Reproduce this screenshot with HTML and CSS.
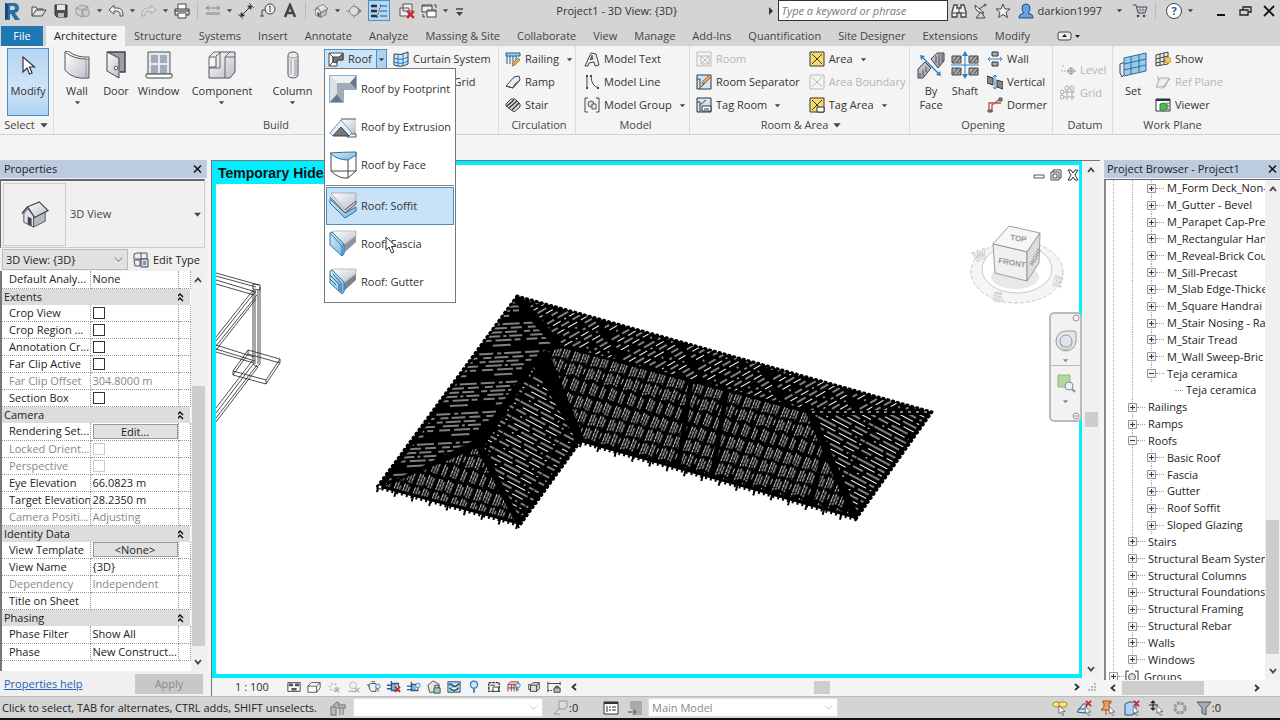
FILE: index.html
```
<!DOCTYPE html>
<html lang="en">
<head>
    <meta charset="UTF-8">
    <meta name="viewport" content="width=device-width, initial-scale=1.0">
    <title>Project1 - 3D View: {3D}</title>
    <link rel="stylesheet" href="styles.css">
</head>
<body>
    <!-- shared icons -->
    <svg class="defs" aria-hidden="true">
        <defs>
            <linearGradient id="steel" x1="0" y1="0" x2="1" y2="1"><stop offset="0" stop-color="#fff"/><stop offset="1" stop-color="#b9bec8"/></linearGradient>
            <linearGradient id="dark" x1="0" y1="0" x2="1" y2="1"><stop offset="0" stop-color="#e8eaee"/><stop offset="1" stop-color="#777d88"/></linearGradient>
            <linearGradient id="sky" x1="0" y1="0" x2="1" y2="1"><stop offset="0" stop-color="#d5ecfa"/><stop offset="1" stop-color="#7fb6dc"/></linearGradient>
        </defs>
        <symbol id="down" viewBox="0 0 8 8"><path d="M1 2.500h6L4 6z" fill="#444"/></symbol>
        <symbol id="chev-up" viewBox="0 0 10 10"><path d="M2 7l3-3.500 3 3.500" fill="none" stroke="#444" stroke-width="1.800"/></symbol>
        <symbol id="chev-down" viewBox="0 0 10 10"><path d="M2 3l3 3.500L8 3" fill="none" stroke="#444" stroke-width="1.800"/></symbol>
        <symbol id="chev-left" viewBox="0 0 10 10"><path d="M7 2L3.500 5 7 8" fill="none" stroke="#333" stroke-width="1.800"/></symbol>
        <symbol id="chev-right" viewBox="0 0 10 10"><path d="M3 2l3.500 3L3 8" fill="none" stroke="#333" stroke-width="1.800"/></symbol>
        <symbol id="chev-wide" viewBox="0 0 10 10"><path d="M1 3l4 4 4-4" fill="none" stroke="#666" stroke-width="1"/></symbol>
        <symbol id="collapse" viewBox="0 0 10 10"><path d="M2 5l3-3 3 3M2 9l3-3 3 3" fill="none" stroke="#111" stroke-width="1.500"/></symbol>
        <symbol id="cross" viewBox="0 0 10 10"><path d="M1.500 1.500l7 7M8.500 1.500l-7 7" stroke="#111" stroke-width="1.500"/></symbol>
        <symbol id="cursor" viewBox="0 0 12 18"><path d="M1 1v13l3-3 2.500 6 2.500-1-2.500-5.500H11z" fill="#fff" stroke="#334" stroke-width="1"/></symbol>
        <symbol id="plus" viewBox="0 0 9 9"><path d="M.5.5h8v8h-8z" fill="#f4f4f8" stroke="#999"/><path d="M2 4.500h5M4.500 2v5" stroke="#335"/></symbol>
        <symbol id="minus" viewBox="0 0 9 9"><path d="M.5.5h8v8h-8z" fill="#f4f4f8" stroke="#999"/><path d="M2 4.500h5" stroke="#335"/></symbol>
        <symbol id="bulb" viewBox="0 0 8 12"><circle cx="4" cy="4" r="3" fill="#cfe6fa" stroke="#3878b8"/><path d="M4 7v4" stroke="#3878b8" stroke-width="1.500"/></symbol>
        <symbol id="pencil" viewBox="0 0 10 10"><path d="M1 9l1-3 5-5 2 2-5 5z" fill="#f3a64a" stroke="#8a5a22" stroke-width=".7"/></symbol>
        <symbol id="redx" viewBox="0 0 8 8"><path d="M1 1l6 6M7 1L1 7" stroke="#d2232a" stroke-width="2"/></symbol>
        <symbol id="i-house" viewBox="0 0 32 32">
            <path d="M5 15v9l10 5V17L9 10z" fill="#dfe2e8" stroke="#555"/><path d="M15 18l12-5v10l-12 6z" fill="#b4b9c4" stroke="#555"/>
            <path d="M9 8L21 3l9 9-14 7z" fill="url(#steel)" stroke="#444" stroke-width="1.200"/><path d="M9 8l-6 7" stroke="#444" stroke-width="1.500"/><path d="M9 18l4 2v8l-4-2z" fill="#445"/>
        </symbol>
        <symbol id="i-model" viewBox="0 0 16 16"><path d="M1 15L7 2l5 1 3 11-4 1-1-4-5 1-1 3z" fill="#eee" stroke="#444"/><path d="M6 9l2-5 1 4z" fill="#777" stroke="#444" stroke-width=".7"/></symbol>
    </svg>

    <header class="titlebar">
        <div class="qat">
            <button class="app" aria-label="Revit menu"><svg viewBox="0 0 18 20"><path d="M2 2h8q6 0 6 5 0 4-4 5l5 7h-5l-4-6H7v6H2z" fill="#2c6da5"/><path d="M7 5h3q2 0 2 2t-2 2H7z" fill="#d4d4d4"/><path d="M2 2l3 2v13l-3 2z" fill="#174a7c"/></svg></button>
            <button class="tool" aria-label="Open"><svg viewBox="0 0 16 16"><path d="M1 13V4h4l1 2h6v2" fill="#eee" stroke="#444"/><path d="M1 13l4-6h10l-4 6z" fill="#ddd" stroke="#444"/></svg></button>
            <button class="tool" aria-label="Save"><svg viewBox="0 0 16 16"><path d="M2 2h12v12H4l-2-2z" fill="#4a4e5a" stroke="#333"/><path d="M4 2h8v5H4z" fill="#e8e8e8"/><path d="M5 10h6v4H5z" fill="#bbb"/></svg></button>
            <button class="tool" aria-label="Synchronize"><svg viewBox="0 0 16 16"><path d="M1 5l6-3 6 2v7l-6 3-6-3z" fill="#d0d0d0" stroke="#999"/><path d="M1 5l6 2 6-3M7 7v7" fill="none" stroke="#999"/><circle cx="11" cy="10" r="3.500" fill="#ccc" stroke="#999"/></svg></button>
            <svg class="caret"><use href="#down"/></svg>
            <button class="tool" aria-label="Undo"><svg viewBox="0 0 16 16"><path d="M1 7l5-5v3h3q6 0 6 7v1h-3q1-5-4-5H6v3z" fill="#eee" stroke="#555"/></svg></button>
            <svg class="caret"><use href="#down"/></svg>
            <button class="tool" aria-label="Redo"><svg viewBox="0 0 16 16"><path d="M15 7l-5-5v3H7Q1 5 1 12v1h3Q3 8 8 8h2v3z" fill="#ddd" stroke="#aaa"/></svg></button>
            <svg class="caret"><use href="#down"/></svg>
            <button class="tool" aria-label="Print"><svg viewBox="0 0 16 16"><path d="M4 6V1h8v5" fill="#fff" stroke="#444"/><path d="M1 6h14v6H1z" fill="#ddd" stroke="#333"/><path d="M4 10h8v5H4z" fill="#fff" stroke="#444"/><path d="M1 8h14" stroke="#333"/></svg></button>
            <span class="sep"></span>
            <button class="tool" aria-label="Measure"><svg viewBox="0 0 16 16"><path d="M1 5h14M4 3L1 5l3 2M12 3l3 2-3 2" fill="none" stroke="#888"/><path d="M1 9h14v3H1z" fill="#aaa"/></svg></button>
            <svg class="caret"><use href="#down"/></svg>
            <button class="tool" aria-label="Aligned dimension"><svg viewBox="0 0 16 16"><path d="M3 13L13 3" stroke="#333"/><path d="M2 14l1-5 4 4zM14 2l-5 1 4 4z" fill="#333"/><path d="M11 0l5 5M0 11l5 5" stroke="#555"/></svg></button>
            <button class="tool" aria-label="Tag by category"><svg viewBox="0 0 16 16"><circle cx="10" cy="6" r="5" fill="#eee" stroke="#444"/><path d="M5 7H2v6M9 4l1-1v6M0 13h4" fill="none" stroke="#444"/></svg></button>
            <button class="tool" aria-label="Text"><svg viewBox="0 0 16 16"><path d="M3 14L8 2l5 12M5 10h6" fill="none" stroke="#444" stroke-width="2.500"/></svg></button>
            <span class="sep"></span>
            <button class="tool" aria-label="Default 3D view"><svg><use href="#i-house"/></svg></button>
            <svg class="caret"><use href="#down"/></svg>
            <button class="tool" aria-label="Section"><svg viewBox="0 0 16 16"><path d="M10 3l6 5-6 5z" fill="#888"/><circle cx="8" cy="8" r="4.500" fill="#ddd" stroke="#888"/><path d="M0 8h3M8 1v2M8 13v2" stroke="#888"/></svg></button>
            <button class="tool on" aria-label="Thin lines"><svg viewBox="0 0 16 16"><path d="M0 3h6M0 8h6M0 13h6" stroke="#234" stroke-width="2.500"/><path d="M9 3h7M9 8h7M9 13h7" stroke="#357"/><path d="M6 15l4-14" stroke="#357" stroke-dasharray="2 1"/></svg></button>
            <button class="tool" aria-label="Close hidden"><svg viewBox="0 0 16 16"><path d="M4 1h9v7H4zM1 5h9v8H1z" fill="#eee" stroke="#555"/><use href="#redx" x="7" y="7" width="9" height="9"/></svg></button>
            <button class="tool" aria-label="Switch windows"><svg viewBox="0 0 16 16"><path d="M1 2h10v7H1z" fill="#eee" stroke="#444"/><path d="M6 7h9v7H6z" fill="#fff" stroke="#444"/><path d="M1 3h10M6 8h9M13 2h2v3M2 11v3h2" fill="none" stroke="#444"/></svg></button>
            <svg class="caret"><use href="#down"/></svg>
            <button class="tool slim" aria-label="Customize toolbar"><svg viewBox="0 0 16 16"><path d="M5 6h7" stroke="#444" stroke-width="1.500"/><path d="M5 9h7l-3.500 4z" fill="#444"/></svg></button>
        </div>
        <h1 class="title">Project1 - 3D View: {3D}</h1>
        <svg class="play" viewBox="0 0 8 8"><path d="M2 0v8l4-4z" fill="#333"/></svg>
        <input class="search" type="text" aria-label="Search help" placeholder="Type a keyword or phrase">
        <div class="account">
            <button class="tool" aria-label="Search"><svg viewBox="0 0 16 16"><path d="M3 2h3v3h4V2h3l2 7v5h-5v-4H6v4H1V9z" fill="#eee" stroke="#444" stroke-width="1.300"/><path d="M1 10h5M10 10h5M8 5v5" stroke="#444"/></svg></button>
            <button class="tool" aria-label="Communication center"><svg viewBox="0 0 16 16"><path d="M2 2q0 8 9 8z" fill="#eee" stroke="#444"/><path d="M6 6l6-4M7 10l-4 5h9l-3-5" fill="none" stroke="#444"/><circle cx="12" cy="2" r="1.500" fill="#666"/></svg></button>
            <button class="tool" aria-label="Favorites"><svg viewBox="0 0 16 16"><path d="M8 1l2 5h5l-4 3.500 1.500 5L8 11.500l-4.500 3L5 9.500 1 6h5z" fill="#eee" stroke="#444"/></svg></button>
            <button class="user"><svg viewBox="0 0 16 16"><path d="M8 1q4 0 4 4 0 3-2 5 5 1 5 4v1H1v-1q0-3 5-4-2-2-2-5 0-4 4-4z" fill="#6ba0e4" stroke="#224a8a"/></svg>darkion1997</button>
            <svg class="caret user-caret"><use href="#down"/></svg>
            <button class="tool" aria-label="App store"><svg viewBox="0 0 16 16"><path d="M1 2h3l2 8h7l2-6H5" fill="#dde" stroke="#445"/><circle cx="6" cy="13" r="1.300" fill="#445"/><circle cx="12" cy="13" r="1.300" fill="#445"/><path d="M6 7h8M8 4v6M11 4v6" stroke="#667" stroke-width=".7"/></svg></button>
            <span class="sep"></span>
            <button class="tool help" aria-label="Help"><span>?</span></button>
            <svg class="caret"><use href="#down"/></svg>
        </div>
        <div class="winctl">
            <button class="tool" aria-label="Minimize"><svg viewBox="0 0 16 16"><path d="M4 12h8" stroke="#111" stroke-width="2"/></svg></button>
            <button class="tool" aria-label="Restore"><svg viewBox="0 0 16 16"><path d="M6 7V4h8v5h-3M3 7h8v5H3z" fill="none" stroke="#222" stroke-width="1.300"/></svg></button>
            <button class="tool" aria-label="Close"><svg viewBox="0 0 16 16"><path d="M3 3l10 10M13 3L3 13" stroke="#111" stroke-width="1.800"/></svg></button>
        </div>
    </header>

    <nav class="tabs">
        <button class="tab file">File</button>
        <button class="tab active">Architecture</button>
        <button class="tab">Structure</button>
        <button class="tab">Systems</button>
        <button class="tab">Insert</button>
        <button class="tab">Annotate</button>
        <button class="tab">Analyze</button>
        <button class="tab">Massing &amp; Site</button>
        <button class="tab">Collaborate</button>
        <button class="tab">View</button>
        <button class="tab">Manage</button>
        <button class="tab">Add-Ins</button>
        <button class="tab">Quantification</button>
        <button class="tab">Site Designer</button>
        <button class="tab">Extensions</button>
        <button class="tab">Modify</button>
        <button class="tab state" aria-label="Minimize ribbon"><svg viewBox="0 0 24 10"><rect x="1" y="1" width="13" height="8" rx="2" fill="#eee" stroke="#444"/><path d="M5 6l2.500-3L10 6zM18 4h5l-2.500 3z" fill="#222"/></svg></button>
    </nav>

    <section class="ribbon">
        <div class="panel select">
            <div class="tools">
                <button class="big modify"><svg viewBox="0 0 28 28"><path d="M9 6v15l4-4 2.500 6 2.500-1-2.500-6h5z" fill="#fff" stroke="#334" stroke-width="1.200"/></svg>Modify</button>
            </div>
            <div class="caption">Select <svg class="caret"><use href="#down"/></svg></div>
        </div>
        <div class="panel build">
            <div class="tools">
                <button class="big"><svg viewBox="0 0 28 28"><path d="M2 1q10 8 24 7v19Q10 29 2 19z" fill="url(#steel)" stroke="#555"/><path d="M2 1l3-1q9 7 21 6v2" fill="#fff" stroke="#555"/><path d="M23 9v18" stroke="#999"/></svg>Wall<svg class="caret"><use href="#down"/></svg></button>
                <button class="big"><svg viewBox="0 0 28 28"><path d="M5 1h18v20h-5" fill="#999ea8" stroke="#444" stroke-width="1.500"/><path d="M5 1l12 6v20L5 20z" fill="url(#steel)" stroke="#444"/><circle cx="14" cy="17" r="1.800" fill="#fff" stroke="#555"/></svg>Door</button>
                <button class="big"><svg viewBox="0 0 28 28"><path d="M3 1h22v22H3z" fill="#e6e8ec" stroke="#555"/><path d="M6 4h7v8H6zM15 4h7v8h-7zM6 14h7v8H6zM15 14h7v8h-7z" fill="#a2abb9"/><path d="M1 23h26v3l-2 1H3l-2-1z" fill="#fff" stroke="#444"/></svg>Window</button>
                <button class="big"><svg viewBox="0 0 28 28"><path d="M1 17l1-1h6V5l5-4h14v20l-5 6H1z" fill="url(#steel)" stroke="#555"/><path d="M1 6l5-5h7M1 6v11h11V1M1 6h6M17 27V6l5-5M17 6h10" fill="none" stroke="#666"/></svg>Component<svg class="caret"><use href="#down"/></svg></button>
                <button class="big"><svg viewBox="0 0 28 28"><path d="M9 5q0-4 5-4t5 4v18q0 4-5 4t-5-4z" fill="#e9ebee" stroke="#555"/><path d="M9 5q5 4 10 0M12 8v16" fill="none" stroke="#999"/><path d="M15 8h3v17h-3z" fill="#b9bec8"/></svg>Column<svg class="caret"><use href="#down"/></svg></button>
                <div class="stack roofs">
                    <button class="small split"><svg viewBox="0 0 16 16"><path d="M1 2h14v7H9v6H1z" fill="#fff" stroke="#444"/><path d="M5 6h6l4-4v7H9v3l-4-1z" fill="#777" stroke="#444"/><path d="M1 2l4 4v5l-4 4" fill="none" stroke="#444"/></svg><span>Roof</span><i><svg class="caret"><use href="#down"/></svg></i></button>
                </div>
                <div class="stack">
                    <button class="small"><svg viewBox="0 0 16 16"><path d="M1 3q7 2 14-2v12q-7 4-14 1z" fill="#cfe6f7" stroke="#245"/><path d="M5 3v12M10 3v12M1 7q7 3 14-1M1 11q7 3 14-1" fill="none" stroke="#2374b4"/></svg>Curtain System</button>
                    <button class="small"><svg viewBox="0 0 16 16"><path d="M1 1h14v14H1zM6 1v14M11 1v14" fill="#cfe6f7" stroke="#2374b4"/></svg>Curtain Grid</button>
                    <button class="small"><svg viewBox="0 0 16 16"><path d="M5 1h6v14H5z" fill="#ddd" stroke="#444"/></svg>Mullion</button>
                </div>
            </div>
            <div class="caption">Build</div>
            <div class="menu">
                <button><svg viewBox="0 0 28 28"><path d="M1 1h26v13H14v13H1z" fill="#c3c8d1" stroke="#5b9bd5" stroke-width="1.500"/><path d="M1 1l7 7h13l6-7z" fill="#eef0f3"/><path d="M8 8v13l-7 6V1z" fill="#dde0e5"/><path d="M27 1v13l-6-6zM1 27h13l-6-8z" fill="#6f7580"/><path d="M8 8h13l6 6H14v13l-6-7z" fill="#a5abb6"/></svg>Roof by Footprint</button>
                <button><svg viewBox="0 0 28 28"><path d="M12 6h15v16h-8z" fill="url(#steel)"/><path d="M12 6h15M18 21h9v3h-9z" fill="#fff" stroke="#555"/><path d="M1 20L12 7l11 13-3 3-8-9-8 9z" fill="#eee" stroke="#5b9bd5"/><path d="M4 23l8-9 8 9z" fill="#777" stroke="#444"/></svg>Roof by Extrusion</button>
                <button><svg viewBox="0 0 28 28"><path d="M2 3v17q8 8 17 7l8-7V1M19 9v18M2 20h25" fill="none" stroke="#444"/><path d="M1 2q14-1 26-1v3l-8 5Q8 9 1 2z" fill="url(#sky)" stroke="#2c6d9f"/></svg>Roof by Face</button>
                <hr>
                <button class="hot"><svg viewBox="0 0 28 28"><path d="M1 11l15 15 11-7v-4l-11 6L1 7z" fill="url(#sky)" stroke="#2c6d9f"/><path d="M2 1h25v8L16 18z" fill="url(#steel)" stroke="#999" stroke-width=".7"/><path d="M16 18l11-9v3l-11 9L1 5" fill="#ccc" stroke="#555"/></svg>Roof: Soffit</button>
                <button><svg viewBox="0 0 28 28"><path d="M3 1h24v5L14 15z" fill="url(#steel)" stroke="#aaa" stroke-width=".7"/><path d="M15 15L27 6v6L15 23z" fill="#8e949f"/><path d="M1 3l2-1 12 12v10l-2 2L1 15z" fill="url(#sky)" stroke="#2c7ab0"/><path d="M1 3l12 13v10M13 16l2-2" fill="none" stroke="#2c7ab0"/></svg>Roof: Fascia</button>
                <button><svg viewBox="0 0 28 28"><path d="M3 1h24v5L14 15z" fill="url(#steel)" stroke="#aaa" stroke-width=".7"/><path d="M15 15L27 6v6L15 23z" fill="#7e848f"/><path d="M1 3l2-1 12 12v10l-2 2L1 15z" fill="url(#sky)" stroke="#2c7ab0"/><path d="M1 7l9 9v7M4 6l8 9v9M1 11l6 6" fill="none" stroke="#1e6496"/></svg>Roof: Gutter</button>
                <svg class="pointer"><use href="#cursor"/></svg>
            </div>
        </div>
        <div class="panel circulation">
            <div class="tools">
                <div class="stack">
                    <button class="small"><svg viewBox="0 0 16 16"><path d="M1 2h14v3H1zM2 5v8M5 5v8M8 5v8M11 5v5" fill="#9fd0f2" stroke="#1f5f92"/><use href="#pencil" x="6" y="6" width="10" height="10"/></svg>Railing<svg class="caret"><use href="#down"/></svg></button>
                    <button class="small"><svg viewBox="0 0 16 16"><path d="M1 12l8-9 5-1 1 4-7 8z" fill="#eee" stroke="#444"/><path d="M1 12l7 2M8 14l2-4 5-4" fill="none" stroke="#444"/></svg>Ramp</button>
                    <button class="small"><svg viewBox="0 0 16 16"><path d="M1 7l5-5h4l5 5v3l-6 5-8-6z" fill="#ddd" stroke="#444"/><path d="M2 9l7-6M4 11l8-7M7 13l7-7" stroke="#333" stroke-width="1.300"/></svg>Stair</button>
                </div>
            </div>
            <div class="caption">Circulation</div>
        </div>
        <div class="panel model">
            <div class="tools">
                <div class="stack">
                    <button class="small"><svg><use href="#i-model"/></svg>Model Text</button>
                    <button class="small"><svg viewBox="0 0 16 16"><path d="M3 2v12M7 2q0 10 8 12" fill="none" stroke="#444"/><path d="M2 1h2v2H2zM2 13h2v2H2zM6 1h2v2H6zM13 13h2v2h-2z" fill="#444"/></svg>Model Line</button>
                    <button class="small"><svg viewBox="0 0 16 16"><path d="M4 1H1v14h3M12 1h3v14h-3" fill="none" stroke="#444"/><circle cx="7" cy="7" r="3" fill="#ddd" stroke="#555"/><path d="M8 7h4v5H8z" fill="#eee" stroke="#555"/></svg>Model Group<svg class="caret"><use href="#down"/></svg></button>
                </div>
            </div>
            <div class="caption">Model</div>
        </div>
        <div class="panel room">
            <div class="tools">
                <div class="stack">
                    <button class="small" disabled><svg viewBox="0 0 16 16"><path d="M1 1h14v14H1zM5 5h8v8H5zM5 5l8 8M13 5l-8 8M1 5h4" fill="none" stroke="#bbb"/></svg>Room</button>
                    <button class="small"><svg viewBox="0 0 16 16"><path d="M1 1h14v14H1z" fill="#cde6f5" stroke="#333"/><path d="M1 5h3v10M5 13l8-8" fill="none" stroke="#345"/><use href="#pencil" x="5" y="1" width="10" height="10"/></svg>Room Separator</button>
                    <button class="small"><svg viewBox="0 0 16 16"><path d="M1 1h14v14H1z" fill="#cde6f5" stroke="#333"/><path d="M1 5h3v10M4 8l6-5" fill="none" stroke="#345"/><path d="M6 9h9v5H6z" fill="#fff" stroke="#333"/><path d="M8 12h5" stroke="#333"/></svg>Tag Room<svg class="caret"><use href="#down"/></svg></button>
                </div>
                <div class="stack">
                    <button class="small"><svg viewBox="0 0 16 16"><path d="M1 1h14v14H1zM3 3l10 10M13 3L3 13" fill="#f3dc6a" stroke="#433"/></svg>Area<svg class="caret"><use href="#down"/></svg></button>
                    <button class="small" disabled><svg viewBox="0 0 16 16"><path d="M1 1h14v14H1zM3 3l10 10M13 3L3 13" fill="none" stroke="#bbb"/></svg>Area Boundary</button>
                    <button class="small"><svg viewBox="0 0 16 16"><path d="M1 1h14v14H1zM3 3l10 10M13 3L3 13" fill="#f3dc6a" stroke="#433"/><path d="M8 10h7v5H8z" fill="#fff" stroke="#333"/></svg>Tag Area<svg class="caret"><use href="#down"/></svg></button>
                </div>
            </div>
            <div class="caption">Room &amp; Area <svg class="caret"><use href="#down"/></svg></div>
        </div>
        <div class="panel opening">
            <div class="tools">
                <button class="big"><svg viewBox="0 0 28 28"><path d="M1 27v-9l7-7 6 6-8 10zM14 8l6-6h7v8l-6 7z" fill="url(#dark)" stroke="#444"/><path d="M3 22v4M6 19v6M9 16v5M19 5v7M22 3v11M25 3v8" stroke="#555"/><path d="M5 6l17 17" stroke="#2c83cc" stroke-width="1.500"/><path d="M3 4l5 1-4 4zM24 25l-5-1 4-4z" fill="#2c83cc"/></svg>By<br>Face</button>
                <button class="big"><svg viewBox="0 0 28 28"><path d="M1 5h9v7H1zM18 5h9v7h-9zM1 17h9v7H1zM18 17h9v7h-9z" fill="#aaa" stroke="#444"/><path d="M2 11l5-6M6 11l4-5M19 11l5-6M23 11l4-5M2 23l5-6M6 23l4-5M19 23l5-6M23 23l4-5" stroke="#444"/><path d="M14 3v22M0 14h28" stroke="#2c83cc"/><path d="M11 5l3-5 3 5zM11 23l3 5 3-5z" fill="#2c83cc"/></svg>Shaft</button>
                <div class="stack">
                    <button class="small"><svg viewBox="0 0 16 16"><path d="M5 1h6v4H5zM5 11h6v4H5z" fill="#aaa" stroke="#333"/><path d="M1 8h14M3 6L1 8l2 2M13 6l2 2-2 2" fill="none" stroke="#2c83cc"/></svg>Wall</button>
                    <button class="small"><svg viewBox="0 0 16 16"><path d="M0 2l6 2v7L0 9zM10 6l6 2v7l-6-2z" fill="#888" stroke="#333"/><path d="M8 1v14M6 3l2-2 2 2M6 13l2 2 2-2" fill="none" stroke="#2c83cc"/></svg>Vertical</button>
                    <button class="small"><svg viewBox="0 0 16 16"><path d="M2 15V6h12M5 15V8l8-6" fill="none" stroke="#c0504d" stroke-width="1.300"/><path d="M12 1h3v3h-3zM1 13h4v2H1z" fill="#888" stroke="#555"/></svg>Dormer</button>
                </div>
            </div>
            <div class="caption">Opening</div>
        </div>
        <div class="panel datum">
            <div class="tools">
                <div class="stack">
                    <button class="small" disabled><svg viewBox="0 0 16 16"><path d="M1 9h9M3 3v3" stroke="#aaa" stroke-dasharray="2 1"/><circle cx="11" cy="9" r="3" fill="#ddd" stroke="#aaa"/><path d="M11 5v8M7 9h9" stroke="#999"/></svg>Level</button>
                    <button class="small" disabled><svg viewBox="0 0 16 16"><path d="M7 5v10M12 5v10M4 7h11M4 12h11" stroke="#aaa"/><g fill="none" stroke="#aaa"><circle cx="7" cy="3" r="2"/><circle cx="12" cy="3" r="2"/><circle cx="2" cy="7" r="2"/><circle cx="2" cy="12" r="2"/></g></svg>Grid</button>
                </div>
            </div>
            <div class="caption">Datum</div>
        </div>
        <div class="panel workplane">
            <div class="tools">
                <button class="big"><svg viewBox="0 0 28 28"><path d="M1 13l5-2v12l-3 3-2-4z" fill="#eee" stroke="#445"/><path d="M5 7l22-5v18L5 25z" fill="#9ccbea" stroke="#2c6d9f"/><path d="M12 6v17M20 4v17M5 13l22-5M5 19l22-5" stroke="#2c6d9f"/></svg>Set</button>
                <div class="stack">
                    <button class="small"><svg viewBox="0 0 16 16"><path d="M1 4l12-3v12L1 15z" fill="#eee" stroke="#444"/><path d="M5 3v11M9 2v11M1 8l12-3M1 12l12-3" stroke="#444"/><circle cx="13" cy="9" r="3" fill="#ffc84a" stroke="#b87a14" stroke-width=".6"/></svg>Show</button>
                    <button class="small" disabled><svg viewBox="0 0 16 16"><path d="M5 4h9l-4 9H1z" fill="#eee" stroke="#aaa"/><path d="M6 15l9-10M3 2v4" stroke="#aaa"/></svg>Ref Plane</button>
                    <button class="small"><svg viewBox="0 0 16 16"><path d="M1 2h14v12H1z" fill="#fff" stroke="#333"/><path d="M1 3h14" stroke="#333" stroke-width="2"/><path d="M5 7l4-1 3 1v5l-4 2-3-1z" fill="#5cb04c" stroke="#285"/><path d="M13 5v8" stroke="#444" stroke-dasharray="2 1"/></svg>Viewer</button>
                </div>
            </div>
            <div class="caption">Work Plane</div>
        </div>
    </section>

    <main class="work">
        <aside class="props">
            <h2 class="dock-title">Properties<button aria-label="Close properties"><svg><use href="#cross"/></svg></button></h2>
            <div class="type">
                <div class="thumb"><svg><use href="#i-house"/></svg></div>
                <select aria-label="Type selector"><option>3D View</option></select>
                <svg class="caret"><use href="#down"/></svg>
            </div>
            <div class="instance">
                <div class="combo"><select aria-label="View"><option>3D View: {3D}</option></select><svg><use href="#chev-wide"/></svg></div>
                <button class="edit"><svg viewBox="0 0 16 16"><path d="M1 2l3-1h4v6H1zM8 1h6v6H8M1 8h6v6H2z" fill="#eee" stroke="#556"/><path d="M8 7h7v8H8z" fill="#cde3f5" stroke="#445"/><path d="M10 10h3M10 12h3" stroke="#445"/></svg>Edit Type</button>
            </div>
            <div class="grid">
                <table>
                    <tr><th>Default Analy...</th><td>None</td><td></td></tr>
                    <tr class="group"><th colspan="2">Extents</th><td><svg><use href="#collapse"/></svg></td></tr>
                    <tr><th><label for="crop">Crop View</label></th><td><input type="checkbox" id="crop"></td><td></td></tr>
                    <tr><th><label for="region">Crop Region ...</label></th><td><input type="checkbox" id="region"></td><td></td></tr>
                    <tr><th><label for="anno">Annotation Cr...</label></th><td><input type="checkbox" id="anno"></td><td></td></tr>
                    <tr><th><label for="farclip">Far Clip Active</label></th><td><input type="checkbox" id="farclip"></td><td></td></tr>
                    <tr class="off"><th>Far Clip Offset</th><td>304.8000 m</td><td></td></tr>
                    <tr><th><label for="section">Section Box</label></th><td><input type="checkbox" id="section"></td><td></td></tr>
                    <tr class="group"><th colspan="2">Camera</th><td><svg><use href="#collapse"/></svg></td></tr>
                    <tr><th>Rendering Set...</th><td><button>Edit...</button></td><td></td></tr>
                    <tr class="off"><th><label for="locked">Locked Orient...</label></th><td><input type="checkbox" id="locked" disabled></td><td></td></tr>
                    <tr class="off"><th><label for="persp">Perspective</label></th><td><input type="checkbox" id="persp" disabled></td><td></td></tr>
                    <tr><th>Eye Elevation</th><td>66.0823 m</td><td></td></tr>
                    <tr><th>Target Elevation</th><td>28.2350 m</td><td></td></tr>
                    <tr class="off"><th>Camera Positi...</th><td>Adjusting</td><td></td></tr>
                    <tr class="group"><th colspan="2">Identity Data</th><td><svg><use href="#collapse"/></svg></td></tr>
                    <tr><th>View Template</th><td><button>&lt;None&gt;</button></td><td></td></tr>
                    <tr><th>View Name</th><td>{3D}</td><td></td></tr>
                    <tr class="off"><th>Dependency</th><td>Independent</td><td></td></tr>
                    <tr><th>Title on Sheet</th><td></td><td></td></tr>
                    <tr class="group"><th colspan="2">Phasing</th><td><svg><use href="#collapse"/></svg></td></tr>
                    <tr><th>Phase Filter</th><td>Show All</td><td></td></tr>
                    <tr><th>Phase</th><td>New Construct...</td><td></td></tr>
                </table>
                <div class="vscroll"><svg><use href="#chev-up"/></svg><span class="space"></span><span class="thumb"></span><svg><use href="#chev-down"/></svg></div>
            </div>
            <div class="foot"><a href="#help">Properties help</a><button disabled>Apply</button></div>
        </aside>

        <section class="view">
            <div class="stage">
                <div class="canvas">
                    <span class="mode">Temporary Hide/Isolate</span>
                    <svg class="drawing" viewBox="216 165 863 510" preserveAspectRatio="xMinYMin slice">
                        <defs>
                            <pattern id="left" width="46" height="29" patternUnits="userSpaceOnUse" patternTransform="rotate(-3)">
                                <path d="M0 2h14M18 2h4M25 2h17M4 6h8M15 6h14M33 6h11M0 10h6M9 10h15M27 10h12M6 14h16M25 14h3M31 14h13M2 18h11M17 18h16M36 18h6M14 23h18" stroke="#fff" stroke-width="1.200"/>
                            </pattern>
                            <pattern id="back" width="60" height="23" patternUnits="userSpaceOnUse" patternTransform="rotate(-30)">
                                <path d="M0 2h9M12 2h8M24 2h12M40 2h3M46 2h9M4 6.500h8M16 6.500h9M29 6.500h2M35 6.500h9M48 6.500h8M0 11h5M9 11h10M23 11h9M36 11h9M50 11h2M3 15.500h9M16 15.500h8M28 15.500h11M43 15.500h9M8 20h2M20 20h7M34 20h2M45 20h8" stroke="#fff" stroke-width="1.200"/>
                            </pattern>
                            <pattern id="front" width="19" height="60" patternUnits="userSpaceOnUse" patternTransform="skewY(15) skewX(-20)">
                                <path d="M1.500 1v12M4 1v12M6.500 3v10M10 0v11M12.500 1v12M15 2v11M1.500 16v12M4 15v12M6.500 18v9M10 15v12M12.500 15v11M15 17v10M1.500 31v12M4 30v12M6.500 32v9M10 29v12M12.500 30v12M16.500 32v6M1.500 45v12M4 47v11M10 44v12M12.500 45v12M15 46v11" stroke="#ddd" stroke-width="1" stroke-dasharray="4 .7"/>
                            </pattern>
                            <pattern id="hip" width="54" height="18" patternUnits="userSpaceOnUse" patternTransform="rotate(28)">
                                <path d="M0 2h20M23 2h15M42 2h2M48 2h5M5 6.500h17M26 6.500h20M49 6.500h2M0 11h11M15 11h18M37 11h14M7 15.500h2M13 15.500h19M36 15.500h12" stroke="#fff" stroke-width="1.200"/>
                            </pattern>
                        </defs>
                        <g>
                            <path d="M517 296L932 412 856 519 580 442 520 525 377 487z" fill="#000"/>
                            <path d="M514 301L552 345 532 360 478 438 385 485z" fill="url(#left)"/>
                            <path d="M524 299L926 410 810 410 564 346z" fill="url(#back)"/>
                            <path d="M545 352L562 348 806 413 850 514 582 439z" fill="url(#front)"/>
                            <path d="M478 448L516 520 385 486z" fill="url(#front)"/>
                            <path d="M534 367L576 440 520 519 484 447z" fill="url(#hip)"/>
                            <path d="M814 415L926 415 857 511z" fill="url(#hip)"/>
                            <path d="M546 352l36 88M691 382l-13 86M727 390l-15 86M824 452l-14 54M478 446l40 76M812 414l44 102" stroke="#000" stroke-width="5"/>
                            <path d="M517 296L932 412M517 296L377 487M932 412L856 519M580 442L520 525" fill="none" stroke="#000" stroke-width="3" stroke-linecap="round" stroke-dasharray="1 4"/>
                            <path d="M377 488L520 526M580 443L856 520" stroke="#000" stroke-width="8" stroke-dasharray="2 16"/>
                            <path d="M377 487L520 525M580 442L856 519" stroke="#000" stroke-width="4" stroke-dasharray="2 3"/>
                            <path d="M812 412h118" stroke="#fff" stroke-dasharray="3 5"/>
                            <path d="M515 520l4 8M852 513l4 8" stroke="#000" stroke-width="2"/>
                            <circle cx="380" cy="487" r="2" fill="#fff" stroke="#000"/>
                        </g>
                        <!-- wireframe frame, cut off by the left edge -->
                        <g fill="none" stroke="#222" stroke-width=".8">
                            <path d="M216 273l43 12M216 276l40 11M216 280l40 12M216 284l38 11M253 284l7 1v5l-7-1z"/>
                            <path d="M253 290v72M255 290v74M258 290v74M260 287v77M253 364l4 3 3-3"/>
                            <path d="M216 337l38-48M216 341l39-49M216 346l41-51M216 350l40-51"/>
                            <path d="M216 345l38 12M216 349l39 12M216 352l38 11"/>
                            <path d="M248 350l32 9-14 21-33-9zM248 354l32 9v-4M280 363l-14 21v-4M266 384l-33-9v-4M233 375l15-21v-4"/>
                            <path d="M252 361l-36 47M254 363l-38 50M257 365l-41 53M258 367l-42 55"/>
                        </g>
                        <!-- view cube -->
                        <g stroke="#bbb" stroke-width=".8">
                            <ellipse cx="1017" cy="272" rx="46" ry="31" fill="#f5f5f5" stroke-dasharray="4 2"/>
                            <ellipse cx="1017" cy="269" rx="35" ry="24" fill="#fff"/>
                            <ellipse cx="1015" cy="277" rx="24" ry="12" fill="#e8e8e8" stroke="none"/>
                            <path d="M993 244l16-18 31 7-13 19z" fill="#f6f6f6" stroke="#888"/>
                            <path d="M993 244l34 8v29l-32-8z" fill="#f0f0f0" stroke="#888"/>
                            <path d="M1027 252l13-19-1 30-12 18z" fill="#ddd" stroke="#888"/>
                        </g>
                        <g class="cube-text">
                            <text x="1010" y="240" transform="rotate(8 1010 240)">TOP</text>
                            <text x="998" y="263" transform="rotate(10 998 263)">FRONT</text>
                            <text class="side" x="1033" y="266" transform="rotate(-62 1033 266)">RIGHT</text>
                            <text class="compass" x="975" y="262" transform="rotate(-20 975 262)">W</text>
                            <text class="compass" x="993" y="302">S</text>
                            <text class="compass" x="1052" y="285" transform="rotate(15 1052 285)">E</text>
                        </g>
                    </svg>
                    <div class="mdi">
                        <button aria-label="Minimize view"><svg viewBox="0 0 12 12"><path d="M1 6h10v3H1z" fill="#fff" stroke="#555"/></svg></button>
                        <button aria-label="Restore view"><svg viewBox="0 0 12 12"><path d="M3 3V1h8v8H9M1 3h8v8H1zM3 5h4v4H3z" fill="none" stroke="#444"/></svg></button>
                        <button aria-label="Close view"><svg viewBox="0 0 12 12"><path d="M1 1h3l2 3 2-3h3L8 6l3 5H8L6 8l-2 3H1l3-5z" fill="#fff" stroke="#333"/></svg></button>
                    </div>
                    <div class="navbar">
                        <svg class="dot" viewBox="0 0 8 8"><circle cx="4" cy="4" r="3" fill="none" stroke="#999"/></svg>
                        <button aria-label="Steering wheel"><svg viewBox="0 0 22 22"><path d="M11 1h8q2 0 2 2v8A10 10 0 1 1 11 1z" fill="#e4e6ec" stroke="#999"/><circle cx="11" cy="11" r="6" fill="#dfe3ee" stroke="#999"/><path d="M5 11q0 7 6 9 6-2 6-9" fill="none" stroke="#aaa"/></svg></button>
                        <svg class="caret"><use href="#down"/></svg>
                        <hr>
                        <button aria-label="Zoom"><svg viewBox="0 0 22 22"><path d="M3 3h12v12H3z" fill="#b4d6a0" stroke="#94b880"/><circle cx="14" cy="14" r="4" fill="#eef2fa" stroke="#889"/><path d="M17 17l3 3" stroke="#889" stroke-width="2"/></svg></button>
                        <svg class="caret"><use href="#down"/></svg>
                        <svg class="dot last" viewBox="0 0 8 8"><circle cx="4" cy="4" r="3" fill="none" stroke="#999"/><path d="M2 4h4" stroke="#999"/></svg>
                    </div>
                </div>
                <div class="vscroll"><svg><use href="#chev-up"/></svg><span class="space"></span><span class="thumb"></span><span class="space"></span><svg><use href="#chev-down"/></svg></div>
            </div>
            <div class="viewbar">
                <button class="scale">1 : 100</button>
                <button aria-label="Detail level"><svg viewBox="0 0 16 16"><path d="M1 3h14v10H1z" fill="#fff" stroke="#333"/><path d="M2 4h5v3H2zM9 4h5v3H9zM5 9h6v3H5z" fill="#556"/></svg></button>
                <button aria-label="Visual style"><svg viewBox="0 0 16 16"><path d="M1 7l4-4h10v6l-4 5H1zM1 7h10v7M11 7l4-4" fill="#fff" stroke="#444"/></svg></button>
                <button aria-label="Sun path"><svg viewBox="0 0 16 16"><circle cx="7" cy="8" r="4" fill="none" stroke="#bbb" stroke-width="2" stroke-dasharray="2 2"/><path d="M9 9l5 5M14 9l-5 5" stroke="#aaa" stroke-width="1.500"/></svg></button>
                <button aria-label="Shadows"><svg viewBox="0 0 16 16"><circle cx="7" cy="6" r="4" fill="#eee" stroke="#bbb"/><path d="M2 13h8M9 9l5 5M14 9l-5 5" stroke="#aaa" stroke-width="1.500"/></svg></button>
                <button aria-label="Rendering dialog"><svg viewBox="0 0 16 16"><path d="M2 5l3-1h5l1 3-1 6H5l-2-2zM0 5l3 3M5 2h4" fill="#eee" stroke="#444"/><use href="#bulb" x="9" y="3" width="7" height="12"/></svg></button>
                <button aria-label="Crop view"><svg viewBox="0 0 16 16"><path d="M5 4h6v8H5z" fill="#7db4e0"/><path d="M5 1v11h10M0 6h5M0 10h5M5 4h8v4" fill="none" stroke="#245a8c" stroke-width="1.500"/><use href="#redx" x="8" y="6" width="8" height="9"/></svg></button>
                <button aria-label="Crop region"><svg viewBox="0 0 16 16"><path d="M5 5h5v7H5z" fill="#7db4e0"/><path d="M5 2v10h8M0 7h5M0 11h5M5 5h6" fill="none" stroke="#245a8c" stroke-width="1.500"/><use href="#bulb" x="9" y="2" width="7" height="12"/></svg></button>
                <button aria-label="Lock view"><svg viewBox="0 0 16 16"><path d="M1 6l6-5 7 4-1 9H3z" fill="#e4e4e4" stroke="#444"/><path d="M8 9h7v6H8z" fill="#9fd0b8" stroke="#345"/><path d="M9 9V6h4v3" fill="none" stroke="#345"/></svg></button>
                <button aria-label="Temporary hide"><svg viewBox="0 0 16 16"><path d="M1 2h14v12H1z" fill="#9fd8ee" stroke="#346"/><path d="M2 6q2-3 4 0 3 3 8-2M3 9q5 6 10 0" fill="#fff" stroke="#234" stroke-width="1.500"/></svg></button>
                <button aria-label="Reveal hidden"><svg><use href="#bulb"/></svg></button>
                <button aria-label="View properties"><svg viewBox="0 0 16 16"><path d="M2 3h12v10H2z" fill="#eee" stroke="#333" stroke-width="1.500" stroke-dasharray="3 1"/><path d="M7 8h6v5H7zM4 6h5" fill="#fff" stroke="#333"/></svg></button>
                <button aria-label="Analytical model"><svg viewBox="0 0 16 16"><path d="M1 13V5l3-3h9v3M1 5h10v8M5 5v8M8 5v8M1 9h10" fill="#f1d5d5" stroke="#844"/><use href="#bulb" x="9" y="2" width="7" height="12"/></svg></button>
                <button aria-label="Displacement"><svg viewBox="0 0 16 16"><path d="M4 6l3-3h7v7l-3 3H4z" fill="#ddd" stroke="#333"/><path d="M4 6h7v7M11 6l3-3M4 5H2v6h2" fill="none" stroke="#333"/></svg></button>
                <button aria-label="Constraints"><svg viewBox="0 0 16 16"><path d="M1 2v12M15 2v4M1 4h14" fill="none" stroke="#333"/><path d="M8 9h7v5H8zM10 9V7h3v2" fill="#bbb" stroke="#333"/><path d="M1 12h6" stroke="#333" stroke-dasharray="2 1"/></svg></button>
                <button aria-label="Scroll left"><svg class="arrow"><use href="#chev-left"/></svg></button>
                <span class="track"><span class="thumb"></span></span>
                <button aria-label="Scroll right"><svg class="arrow"><use href="#chev-right"/></svg></button>
                <svg class="grip" viewBox="0 0 10 10"><path d="M7 1h2v2H7zM4 4h2v2H4zM7 4h2v2H7zM1 7h2v2H1zM4 7h2v2H4zM7 7h2v2H7z" fill="#bbb"/></svg>
            </div>
        </section>

        <aside class="browser">
            <h2 class="dock-title">Project Browser - Project1<button aria-label="Close browser"><svg><use href="#cross"/></svg></button></h2>
            <div class="tree-wrap">
                <div class="tree-view">
                    <ul class="tree">
                        <li class="l2"><svg><use href="#plus"/></svg>M_Form Deck_Non-</li>
                        <li class="l2"><svg><use href="#plus"/></svg>M_Gutter - Bevel</li>
                        <li class="l2"><svg><use href="#plus"/></svg>M_Parapet Cap-Prec</li>
                        <li class="l2"><svg><use href="#plus"/></svg>M_Rectangular Han</li>
                        <li class="l2"><svg><use href="#plus"/></svg>M_Reveal-Brick Cou</li>
                        <li class="l2"><svg><use href="#plus"/></svg>M_Sill-Precast</li>
                        <li class="l2"><svg><use href="#plus"/></svg>M_Slab Edge-Thicke</li>
                        <li class="l2"><svg><use href="#plus"/></svg>M_Square Handrai</li>
                        <li class="l2"><svg><use href="#plus"/></svg>M_Stair Nosing - Ra</li>
                        <li class="l2"><svg><use href="#plus"/></svg>M_Stair Tread</li>
                        <li class="l2"><svg><use href="#plus"/></svg>M_Wall Sweep-Bric</li>
                        <li class="l2"><svg><use href="#minus"/></svg>Teja ceramica</li>
                        <li class="l3">Teja ceramica</li>
                        <li class="l1"><svg><use href="#plus"/></svg>Railings</li>
                        <li class="l1"><svg><use href="#plus"/></svg>Ramps</li>
                        <li class="l1"><svg><use href="#minus"/></svg>Roofs</li>
                        <li class="l2"><svg><use href="#plus"/></svg>Basic Roof</li>
                        <li class="l2"><svg><use href="#plus"/></svg>Fascia</li>
                        <li class="l2"><svg><use href="#plus"/></svg>Gutter</li>
                        <li class="l2"><svg><use href="#plus"/></svg>Roof Soffit</li>
                        <li class="l2"><svg><use href="#plus"/></svg>Sloped Glazing</li>
                        <li class="l1"><svg><use href="#plus"/></svg>Stairs</li>
                        <li class="l1"><svg><use href="#plus"/></svg>Structural Beam System</li>
                        <li class="l1"><svg><use href="#plus"/></svg>Structural Columns</li>
                        <li class="l1"><svg><use href="#plus"/></svg>Structural Foundations</li>
                        <li class="l1"><svg><use href="#plus"/></svg>Structural Framing</li>
                        <li class="l1"><svg><use href="#plus"/></svg>Structural Rebar</li>
                        <li class="l1"><svg><use href="#plus"/></svg>Walls</li>
                        <li class="l1"><svg><use href="#plus"/></svg>Windows</li>
                        <li class="l0"><svg><use href="#plus"/></svg><svg class="kind" viewBox="0 0 14 14"><path d="M4 1H1v12h3M10 1h3v12h-3" fill="none" stroke="#333"/><circle cx="7" cy="7" r="3.500" fill="#ddd" stroke="#555"/></svg>Groups</li>
                    </ul>
                </div>
                <div class="vscroll"><svg><use href="#chev-up"/></svg><span class="space"></span><span class="thumb"></span><svg><use href="#chev-down"/></svg></div>
            </div>
            <div class="hscroll"><svg><use href="#chev-left"/></svg><span class="thumb"></span><span class="space"></span><svg><use href="#chev-right"/></svg></div>
        </aside>
    </main>

    <footer class="status">
        <p>Click to select, TAB for alternates, CTRL adds, SHIFT unselects.</p>
        <svg viewBox="0 0 16 16"><path d="M1 7h5v8H1zM8 5h7v3h-7zM10 8v7M13 8v7M3 6l4-4 3 2" fill="#bbb" stroke="#888" stroke-width="1.300"/></svg>
        <div class="combo workset"><select aria-label="Active workset"><option></option></select><svg><use href="#chev-wide"/></svg></div>
        <button class="count"><svg viewBox="0 0 16 16"><path d="M6 1h8v6l-3 2H6zM6 9l-5 5h6" fill="#ddd" stroke="#999"/></svg>:0</button>
        <button class="opt" aria-label="Design options"><svg viewBox="0 0 16 16"><path d="M1 2h14v12H1z" fill="#fff" stroke="#333"/><path d="M1 3h14" stroke="#333" stroke-width="2"/><path d="M4 6v6M6 7h2M6 10h2M9 7h4M9 10h4" stroke="#333"/></svg></button>
        <button class="opt" aria-label="Active option"><svg viewBox="0 0 16 16"><path d="M3 1h12v14H8V9H3z" fill="#aaa"/><path d="M1 12h7M6 9l3 3-3 3" fill="none" stroke="#777" stroke-width="1.500"/></svg></button>
        <div class="combo option"><select aria-label="Design option" disabled><option>Main Model</option></select><svg><use href="#chev-wide"/></svg></div>
        <div class="filters">
            <button aria-label="Select links"><svg viewBox="0 0 16 16"><rect x="1" y="2" width="7" height="5" rx="2.500" fill="#ffe680" stroke="#a8841c"/><rect x="7" y="2" width="8" height="5" rx="2.500" fill="#ffe680" stroke="#a8841c"/><use href="#cursor" x="6" y="5" width="8" height="11"/></svg></button>
            <button aria-label="Select underlay"><svg viewBox="0 0 16 16"><path d="M1 12l6-8h4l-2 9zM2 9h8" fill="#cfe3f6" stroke="#357"/><use href="#redx" x="9" y="0" width="7" height="7"/><use href="#cursor" x="8" y="6" width="8" height="10"/></svg></button>
            <button aria-label="Select pinned"><svg viewBox="0 0 16 16"><path d="M3 1h8v2h-2v4l3 3H1l3-3V3H3zM6 10v5" fill="#f2a060" stroke="#a0501c"/><use href="#cursor" x="8" y="6" width="8" height="10"/></svg></button>
            <button aria-label="Select by face"><svg viewBox="0 0 16 16"><path d="M1 4l4-2h7v11l-4 2H1z" fill="#a9d3f0" stroke="#357"/><use href="#redx" x="9" y="0" width="7" height="7"/><use href="#cursor" x="8" y="6" width="8" height="10"/></svg></button>
            <button aria-label="Drag on selection"><svg viewBox="0 0 16 16"><path d="M5 1v9M1 5h9M3 3l2-2 2 2M3 8l2 2 2-2" fill="none" stroke="#222" stroke-width="1.200"/><use href="#cursor" x="8" y="5" width="8" height="11"/></svg></button>
            <button aria-label="Background processes"><svg viewBox="0 0 16 16"><circle cx="8" cy="8" r="5" fill="none" stroke="#999" stroke-width="3" stroke-dasharray="3 1"/></svg></button>
            <button class="count"><svg viewBox="0 0 16 16"><path d="M1 2h14l-5 6v7l-4-2V8z" fill="#a9acb4" stroke="#556"/></svg>:0</button>
        </div>
    </footer>
</body>
</html>
```
FILE: styles.css
```
* {
    box-sizing: border-box;
}
body, html {
    margin: 0;
    padding: 0;
    height: 100%;
    overflow: hidden;
}
body {
    display: flex;
    flex-direction: column;
    background: #f4f4f4;
    border-bottom: 2px solid #111;
    color: #333;
    font: 11px/16px "Open Sans", "Noto Sans", sans-serif;
}
button, input, select {
    font: inherit;
    color: inherit;
    margin: 0;
    padding: 0;
    border: none;
    border-radius: 0;
    background: none;
}
button {
    white-space: nowrap;
}
select {
    appearance: none;
    opacity: 1;
}
svg {
    display: block;
    flex: none;
    width: 16px;
    height: 16px;
}
.defs {
    position: absolute;
    width: 0;
    height: 0;
}
.caret {
    width: 7px;
    height: 7px;
}

/* title bar */
.titlebar {
    display: flex;
    align-items: center;
    flex: none;
    height: 26px;
    padding-bottom: 5px;
    background: #d4d4d4;
}
.qat, .account, .winctl {
    display: flex;
    align-items: center;
}
.tool {
    display: flex;
    align-items: center;
    justify-content: center;
    width: 22px;
    height: 21px;
}
.titlebar .caret {
    margin: 0 2px;
}
.app {
    width: 28px;
    padding-left: 3px;
}
.app svg {
    width: 18px;
    height: 20px;
}
.tool.on {
    background: #b5d6f2;
    border: 1px solid #4b8fc7;
    margin: 0 6px 0 3px;
}
.tool.slim {
    width: 16px;
}
.sep {
    width: 1px;
    height: 18px;
    margin: 0 4px;
    background: #bbb;
}
.title {
    flex: 1;
    margin: 0;
    font-size: 11px;
    font-weight: 400;
    text-align: center;
}
.play {
    width: 8px;
    height: 8px;
    margin-right: 3px;
}
.search {
    width: 170px;
    height: 21px;
    padding: 0 3px;
    border: 1px solid #333;
    background: #fff;
}
.search::placeholder {
    color: #777;
    font-style: italic;
    opacity: 1;
}
.user {
    display: flex;
    align-items: center;
    gap: 4px;
    margin-left: 4px;
}
.titlebar .user-caret {
    margin: 0 6px 0 14px;
}
.help span {
    width: 16px;
    height: 16px;
    border: 1px solid #345;
    border-radius: 50%;
    background: #fff;
    color: #1c5a9c;
    font-weight: 700;
    line-height: 14px;
}
.account .help {
    margin-left: 3px;
}
.winctl {
    margin-left: 14px;
    gap: 2px;
}

/* tabs */
.tabs {
    display: flex;
    flex: none;
    gap: 1px;
    height: 20px;
    padding-left: 1px;
    background: #d4d4d4;
}
.tab {
    padding: 0 8px;
    color: #444;
}
.tab.file {
    width: 42px;
    margin-right: 2px;
    background: #1f77b4;
    color: #fff;
}
.tab.active {
    background: #f4f4f4;
    color: #222;
}
.tab.state {
    padding-left: 18px;
}
.tab.state svg {
    width: 24px;
    height: 10px;
}

/* ribbon */
.ribbon {
    display: flex;
    flex: none;
    height: 89px;
    border-bottom: 1px solid #d2d2d2;
}
.panel {
    display: flex;
    flex-direction: column;
    position: relative;
    flex: none;
    border-right: 1px solid #dcdcdc;
}
.tools {
    display: flex;
    flex: 1;
    padding-top: 2px;
}
.caption {
    display: flex;
    justify-content: center;
    align-items: center;
    gap: 4px;
    height: 18px;
    color: #444;
}
.caption .caret {
    width: 10px;
    height: 10px;
}
.select { width: 54px; }
.build { width: 445px; }
.circulation { width: 77px; padding-left: 4px; }
.model { width: 114px; padding-left: 6px; }
.room { width: 220px; padding-left: 4px; }
.opening { width: 143px; padding-left: 4px; }
.datum { width: 60px; padding-left: 5px; }
.workplane { width: 116px; padding-left: 3px; border: none; }
.big {
    display: flex;
    flex-direction: column;
    align-items: center;
    min-width: 34px;
    padding-top: 3px;
    line-height: 14px;
    align-self: flex-start;
}
.big svg {
    width: 28px;
    height: 28px;
    margin-bottom: 5px;
}
.big .caret {
    width: 7px;
    height: 7px;
    margin: 1px 0 0;
}
.modify {
    width: 42px;
    height: 68px;
    margin-left: 7px;
    background: linear-gradient(#b5d5f2, #cfe4f7 60%, #b0d2f2);
    border: 1px solid #4b8fc7;
    padding-top: 2px;
}
.build .tools {
    display: grid;
    grid-template-columns: 36px 42px 43px 84px 57px 70px auto;
    padding-left: 5px;
}
.build .big {
    justify-self: center;
}
.stack {
    display: flex;
    flex-direction: column;
    align-items: flex-start;
    gap: 1px;
}
.small {
    display: flex;
    align-items: center;
    gap: 4px;
    height: 22px;
    padding: 0 3px 0 2px;
}
.small .caret {
    width: 7px;
    height: 7px;
    margin-left: 3px;
}
.small:disabled {
    color: #b4b4b4;
}
.split {
    width: 63px;
    height: 20px;
    margin-top: 1px;
    margin-bottom: 1px;
    margin-left: 3px;
    padding: 0 0 0 3px;
    border: 1px solid #4b8fc7;
    background: #cde4f7;
}
.split span {
    flex: 1;
    text-align: left;
}
.split i {
    display: flex;
    align-items: center;
    align-self: stretch;
    padding: 0 1px;
    border-left: 1px solid #4b8fc7;
    background: #b0d2f2;
}
.split .caret {
    margin: 0;
}
.room .tools {
    gap: 4px;
}
.opening .stack {
    margin-left: 3px;
}
.datum .stack {
    padding-top: 11px;
}
.workplane .tools {
    gap: 3px;
}

/* roof drop-down */
.menu {
    position: absolute;
    top: 22px;
    left: 270px;
    z-index: 5;
    width: 132px;
    padding: 1px;
    border: 1px solid #777;
    background: #fff;
}
.menu button {
    display: flex;
    align-items: center;
    gap: 4px;
    width: 100%;
    height: 38px;
    padding-left: 2px;
    border: 1px solid transparent;
}
.menu button svg {
    width: 28px;
    height: 28px;
}
.menu hr {
    margin: 1px 0;
    border: none;
    border-top: 1px solid #888;
}
.menu .hot {
    background: #c8e2f7;
    border-color: #4b8fc7;
}
.pointer {
    position: absolute;
    left: 60px;
    top: 167px;
    width: 12px;
    height: 18px;
}

/* docked windows */
.work {
    display: flex;
    flex: 1;
    min-height: 0;
    padding-top: 25px;
}
.dock-title {
    display: flex;
    align-items: center;
    justify-content: space-between;
    flex: none;
    height: 18px;
    margin: 0;
    padding: 0 4px;
    background: #bccbdd;
    color: #222;
    font-size: 11px;
    font-weight: 400;
}
.dock-title svg {
    width: 11px;
    height: 10px;
}
.props {
    display: flex;
    flex-direction: column;
    flex: none;
    width: 207px;
    padding-right: 2px;
    background: #f0f0f0;
    color: #222;
}
.props .dock-title {
    margin-right: -2px;
}
.type {
    display: flex;
    align-items: center;
    flex: none;
    height: 69px;
    margin-top: 1px;
    padding: 3px 2px;
    border: 1px solid #ccc;
    border-top: 2px solid #666;
    border-left: 1px solid #666;
}
.type .thumb {
    padding: 15px;
    border: 1px solid #ccc;
}
.type .thumb svg {
    width: 31px;
    height: 31px;
}
.type select {
    flex: 1;
    padding-left: 4px;
    color: #444;
}
.type .caret {
    width: 9px;
    height: 9px;
}
.instance {
    display: flex;
    flex: none;
    height: 23px;
    padding: 1px 0 1px 2px;
}
.combo {
    display: flex;
    align-items: center;
    position: relative;
    background: #e1e1e1;
    border: 1px solid #bbb;
}
.combo select {
    flex: 1;
    padding: 0 3px;
}
.combo svg {
    width: 9px;
    height: 9px;
    margin-right: 4px;
}
.instance .combo {
    width: 126px;
}
.edit {
    display: flex;
    align-items: center;
    gap: 4px;
    padding-left: 5px;
}
.grid {
    display: flex;
    flex: 1;
    min-height: 0;
    border-left: 2px solid #777;
    background: #fff;
}
table {
    flex: 1;
    align-self: flex-start;
    table-layout: fixed;
    border-collapse: collapse;
    width: 187px;
}
th, td {
    height: 17px;
    padding: 0 0 0 2px;
    border: 1px dotted #999;
    border-top: none;
    border-left: none;
    font-weight: 400;
    line-height: 16px;
    text-align: left;
    white-space: nowrap;
    overflow: hidden;
}
th {
    width: 88px;
    padding-left: 7px;
}
td:last-child {
    width: 12px;
}
tr:first-child td:nth-child(2) {
    width: 88px;
}
.group th, .group td {
    height: 16px;
    padding-left: 2px;
    border: none;
    background: #dcdcdc;
    line-height: 16px;
}
.group td {
    padding: 0;
}
.group svg {
    width: 10px;
    height: 10px;
    margin-left: -3px;
}
.off {
    color: #888;
}
td input {
    display: block;
    appearance: none;
    width: 12px;
    height: 12px;
    border: 1px solid #333;
    background: #fff;
}
td input:disabled {
    border-color: #ccc;
}
td button {
    display: block;
    width: 100%;
    height: 15px;
    border: 1px solid #999;
    background: #e1e1e1;
    line-height: 13px;
}
.foot {
    display: flex;
    justify-content: space-between;
    align-items: center;
    flex: none;
    height: 25px;
    padding: 0 2px 0 4px;
}
.foot a {
    color: #1a66b8;
}
.foot button {
    width: 68px;
    height: 20px;
    background: #c8c8c8;
    color: #888;
}

/* scrollbars */
.vscroll {
    display: flex;
    flex-direction: column;
    align-items: center;
    flex: none;
    width: 15px;
    padding: 4px 0;
    background: #f0f0f0;
}
.vscroll svg, .hscroll svg {
    width: 10px;
    height: 10px;
}
.vscroll .thumb {
    width: 13px;
    background: #cdcdcd;
}
.space {
    flex: 1;
}
.grid .space {
    flex: 29;
}
.grid .thumb {
    flex: 75;
    margin-bottom: 11px;
}

/* 3D view */
.view {
    display: flex;
    flex-direction: column;
    flex: 1;
    min-width: 0;
    margin: 0 4px;
    border-top: 1px solid #777;
    border-left: 1px solid #777;
}
.stage {
    display: flex;
    flex: 1;
    min-height: 0;
}
.canvas {
    flex: 1;
    min-width: 0;
    position: relative;
    border: 4px solid #00eeff;
    border-width: 4px 3px 4px 4px;
    background: #fff;
}
.drawing {
    width: 100%;
    height: 100%;
}
.mode {
    position: absolute;
    top: -2px;
    left: -2px;
    height: 21px;
    padding: 0 4px;
    background: #00eeff;
    color: #111;
    font: bold 14px/20px "Liberation Sans", Arial, sans-serif;
}
.cube-text {
    fill: #999;
    font: bold 8px "Liberation Sans", Arial, sans-serif;
}
.side {
    font-size: 6px;
}
.compass {
    fill: #fff;
    stroke: #bbb;
    stroke-width: .7px;
    font-size: 14px;
}
.mdi {
    display: flex;
    gap: 5px;
    position: absolute;
    top: 4px;
    right: 0;
}
.mdi svg {
    width: 12px;
    height: 12px;
}
.navbar {
    display: flex;
    flex-direction: column;
    align-items: center;
    position: absolute;
    top: 147px;
    right: -3px;
    width: 33px;
    height: 110px;
    border: 2px solid #bbb;
    border-radius: 5px;
    background: #f2f2f2;
}
.navbar button svg {
    width: 22px;
    height: 22px;
}
.navbar button {
    margin: 8px 0 5px;
}
.navbar .caret {
    opacity: .6;
}
.navbar hr {
    width: 100%;
    margin: 1px 0 0;
    border: none;
    border-top: 1px solid #bbb;
}
.navbar hr + button {
    margin: 6px 0 4px;
}
.navbar .dot {
    align-self: flex-end;
    width: 8px;
    height: 8px;
}
.navbar .last {
    margin-top: auto;
}
.stage .vscroll {
    width: 18px;
}
.stage .thumb {
    height: 15px;
}
.viewbar {
    display: flex;
    align-items: center;
    flex: none;
    height: 18px;
    padding-right: 3px;
}
.viewbar button {
    width: 20px;
    padding: 0 2px;
}
.viewbar svg {
    height: 14px;
}
.viewbar .scale {
    width: 72px;
    padding-left: 10px;
}
.viewbar .arrow {
    height: 10px;
}
.track {
    display: flex;
    justify-content: center;
    flex: 1;
}
.track .thumb {
    width: 16px;
    height: 13px;
    margin-right: 8px;
    background: #cdcdcd;
}
.viewbar .grip {
    width: 10px;
    height: 10px;
}

/* project browser */
.browser {
    display: flex;
    flex-direction: column;
    flex: none;
    width: 176px;
    color: #222;
}
.browser .dock-title {
    padding: 0 2px 0 3px;
}
.tree-wrap {
    display: flex;
    flex: 1;
    min-height: 0;
    margin-top: 1px;
    border-top: 1px solid #666;
    border-left: 2px solid #888;
    background: #fff;
}
.tree-view {
    flex: 1;
    min-width: 0;
    overflow: hidden;
}
.tree {
    display: grid;
    grid-auto-rows: 1fr;
    height: calc(100% + 5px);
    margin: 0;
    padding: 0;
    list-style: none;
    background: repeating-linear-gradient(#aaa 0 1px, #fff 1px 2px) 7px 0 / 1px 100% no-repeat;
}
.tree li {
    display: flex;
    align-items: center;
    min-height: 0;
    white-space: nowrap;
    line-height: 16px;
}
.tree li::before {
    content: "";
    order: -1;
    width: 8px;
    margin-right: 3px;
    border-top: 1px dotted #999;
}
.tree svg {
    order: -2;
    width: 9px;
    height: 9px;
}
.l0 { padding-left: 3px; }
.l1 { padding-left: 22px; }
.l2 { padding-left: 41px; }
.l3 { padding-left: 69px; }
.l1, .l2, .l3 {
    background: repeating-linear-gradient(#aaa 0 1px, #fff 1px 2px) 26px 0 / 1px 100% no-repeat;
}
.l2 {
    background: repeating-linear-gradient(#aaa 0 1px, #fff 1px 2px) 26px 0 / 1px 100% no-repeat, repeating-linear-gradient(#aaa 0 1px, #fff 1px 2px) 45px 0 / 1px 100% no-repeat;
}
.tree .kind {
    order: 0;
    width: 14px;
    height: 14px;
    margin: 0 5px 0 -4px;
}
.browser .vscroll .space {
    flex: 68;
}
.browser .vscroll .thumb {
    flex: 28;
    margin-bottom: 12px;
}
.hscroll {
    display: flex;
    align-items: center;
    flex: none;
    height: 16px;
    padding: 0 18px 0 4px;
}
.hscroll .thumb {
    width: 82px;
    height: 14px;
    margin-left: 4px;
    background: #cdcdcd;
}

/* status bar */
.status {
    display: flex;
    align-items: center;
    flex: none;
    height: 22px;
    padding: 0 2px;
    border-top: 1px solid #bbb;
    background: #d4d4d4;
    color: #222;
}
.status p {
    width: 328px;
    margin: 0;
}
.status .combo {
    width: 190px;
    height: 19px;
    border-color: #ddd;
    background: #fff;
    color: #888;
}
.status .combo svg {
    opacity: .4;
}
.workset {
    margin-left: 7px;
}
.count {
    display: flex;
    align-items: center;
}
.status > .count {
    width: 60px;
    padding-left: 10px;
}
.opt {
    width: 24px;
    padding-right: 2px;
}
.option {
    margin-left: -3px;
}
.filters {
    display: flex;
    gap: 8px;
    margin-left: auto;
    padding-right: 57px;
}
```
